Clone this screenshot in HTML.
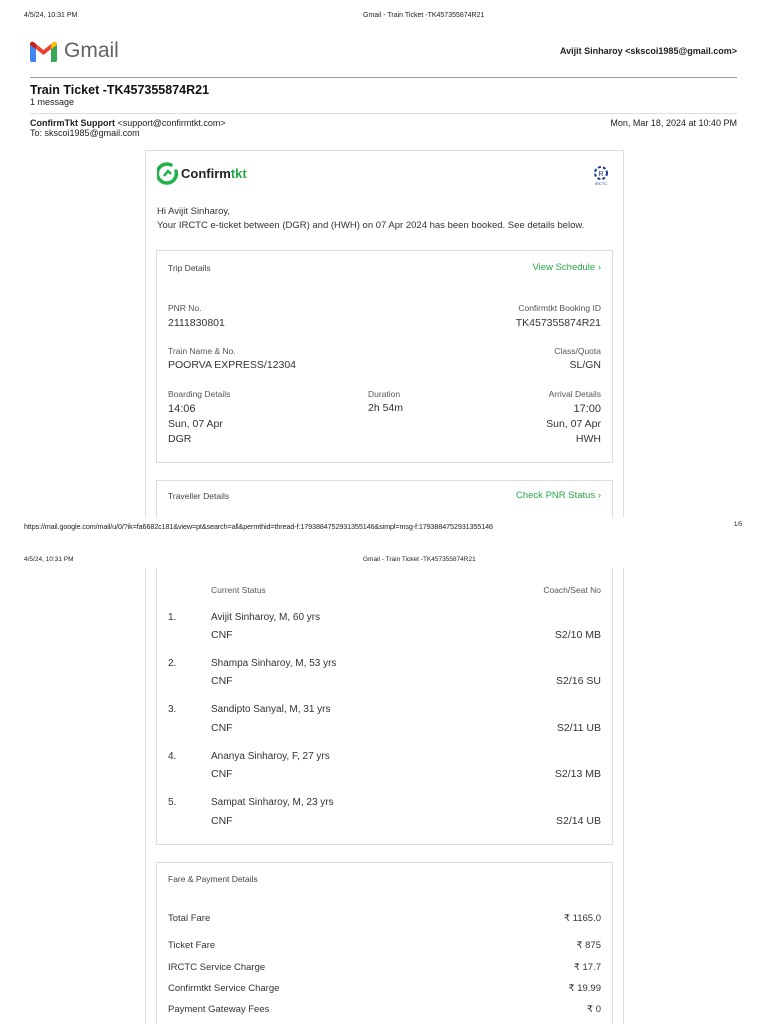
<!DOCTYPE html>
<html><head><meta charset="utf-8"><style>
*{margin:0;padding:0;box-sizing:border-box}
html,body{width:768px;height:1024px;overflow:hidden}
body{position:relative;background:#fff;font-family:"Liberation Sans",sans-serif;color:#222}
.a{position:absolute;white-space:nowrap}
.t7{font-size:7px;color:#222}
.lbl{font-size:8.5px;color:#555}
.val{font-size:10.5px;color:#333}
.g{color:#27a844}
.box{position:absolute;border:1px solid #ddd}
</style></head><body>
<div class="a t7" style="left:24px;top:12px">4/5/24, 10:31 PM</div>
<div class="a t7" style="left:363px;top:12px">Gmail - Train Ticket -TK457355874R21</div>

<svg class="a" style="left:30px;top:41px" width="27" height="21" viewBox="0 0 27 21">
<path d="M0 4 L0 19 Q0 21 2 21 L6 21 L6 8 Z" fill="#4285f4"/>
<path d="M21 8 L21 21 L25 21 Q27 21 27 19 L27 4 Z" fill="#34a853"/>
<path d="M0 4 Q0 0 3.5 1 L13.5 9 L23.5 1 Q27 0 27 4 L21 8 L13.5 14 L6 8 Z" fill="#ea4335"/>
<path d="M21 8 L27 4 Q27 0 23.5 1 L21 3 Z" fill="#fbbc04"/>
<path d="M0 4 Q0 0 3.5 1 L6 3 L6 8 Z" fill="#c5221f"/>
</svg>
<div class="a" style="left:64px;top:39px;font-size:21px;color:#5f6368">Gmail</div>
<div class="a" style="right:31px;top:46px;font-size:9px;font-weight:bold;color:#222">Avijit Sinharoy &lt;skscoi1985@gmail.com&gt;</div>
<div class="a" style="left:30px;top:77px;width:707px;border-top:1px solid #999"></div>
<div class="a" style="left:30px;top:83px;font-size:12.5px;font-weight:bold;color:#111">Train Ticket -TK457355874R21</div>
<div class="a" style="left:30px;top:97px;font-size:9px;color:#222">1 message</div>
<div class="a" style="left:30px;top:113px;width:707px;border-top:1px solid #ddd"></div>
<div class="a" style="left:30px;top:118px;font-size:9px;color:#222"><b>ConfirmTkt Support</b> &lt;support@confirmtkt.com&gt;</div>
<div class="a" style="left:30px;top:128px;font-size:9px;color:#222">To: skscoi1985@gmail.com</div>
<div class="a" style="right:31px;top:118px;font-size:9px;color:#222">Mon, Mar 18, 2024 at 10:40 PM</div>

<div class="box" style="left:145px;top:150px;width:479px;height:380px;border-bottom:none"></div>
<svg class="a" style="left:157px;top:162px" width="22" height="24" viewBox="0 0 22 24"><path d="M14 3 A9.5 9.5 0 1 0 19 9" fill="none" stroke="#22b14c" stroke-width="3.5" stroke-linecap="round"/><path d="M7 14 L11 9 L14 12" fill="none" stroke="#22b14c" stroke-width="2.5"/></svg>
<div class="a" style="left:181px;top:166px;font-size:13px;font-weight:bold;color:#222">Confirm<span class="g">tkt</span></div>
<svg class="a" style="left:592px;top:164px" width="18" height="22" viewBox="0 0 18 22"><circle cx="9" cy="9" r="6" fill="none" stroke="#1a3c8c" stroke-width="2" stroke-dasharray="3 2"/><text x="9" y="12" font-size="7" text-anchor="middle" fill="#1a3c8c" font-family="Liberation Sans">R</text><text x="9" y="21" font-size="4" text-anchor="middle" fill="#1a3c8c" font-family="Liberation Sans">IRCTC</text></svg>
<div class="a" style="left:157px;top:206px;font-size:9.5px;color:#333">Hi Avijit Sinharoy,</div>
<div class="a" style="left:157px;top:220px;font-size:9.5px;color:#333">Your IRCTC e-ticket between (DGR) and (HWH) on 07 Apr 2024 has been booked. See details below.</div>

<div class="box" style="left:156px;top:250px;width:457px;height:213px"></div>
<div class="a lbl" style="left:168px;top:263px;color:#444">Trip Details</div>
<div class="a g" style="right:167px;top:262px;font-size:9.5px">View Schedule ›</div>
<div class="a lbl" style="left:168px;top:303px">PNR No.</div>
<div class="a val" style="left:168px;top:317px">2111830801</div>
<div class="a lbl" style="right:167px;top:303px">Confirmtkt Booking ID</div>
<div class="a val" style="right:167px;top:317px">TK457355874R21</div>
<div class="a lbl" style="left:168px;top:346px">Train Name &amp; No.</div>
<div class="a val" style="left:168px;top:359px">POORVA EXPRESS/12304</div>
<div class="a lbl" style="right:167px;top:346px">Class/Quota</div>
<div class="a val" style="right:167px;top:359px">SL/GN</div>
<div class="a lbl" style="left:168px;top:389px">Boarding Details</div>
<div class="a val" style="left:168px;top:403px;font-size:11px">14:06</div>
<div class="a val" style="left:168px;top:418px">Sun, 07 Apr</div>
<div class="a val" style="left:168px;top:433px">DGR</div>
<div class="a lbl" style="left:368px;top:389px">Duration</div>
<div class="a val" style="left:368px;top:402px">2h 54m</div>
<div class="a lbl" style="right:167px;top:389px">Arrival Details</div>
<div class="a val" style="right:167px;top:403px;font-size:11px">17:00</div>
<div class="a val" style="right:167px;top:418px">Sun, 07 Apr</div>
<div class="a val" style="right:167px;top:433px">HWH</div>

<div class="box" style="left:156px;top:480px;width:457px;height:50px;border-bottom:none"></div>
<div class="a lbl" style="left:168px;top:491px;color:#444">Traveller Details</div>
<div class="a g" style="right:167px;top:490px;font-size:9.5px">Check PNR Status ›</div>

<div class="a" style="left:0;top:517px;width:768px;height:48px;background:#fff"></div>
<div class="a" style="left:24px;top:522px;font-size:7.2px;letter-spacing:-0.1px;color:#222">https://mail.google.com/mail/u/0/?ik=fa6682c181&amp;view=pt&amp;search=all&amp;permthid=thread-f:1793884752931355146&amp;simpl=msg-f:1793884752931355146</div>
<div class="a t7" style="left:734px;top:522px;font-size:6px">1/5</div>
<div class="a t7" style="left:24px;top:556px;font-size:6.5px">4/5/24, 10:31 PM</div>
<div class="a t7" style="left:363px;top:556px;font-size:6.5px">Gmail - Train Ticket -TK457355874R21</div>

<div class="box" style="left:145px;top:568px;width:479px;height:470px;border-top:none"></div>
<div class="box" style="left:156px;top:568px;width:457px;height:277px;border-top:none"></div>
<div class="a lbl" style="left:211px;top:585px">Current Status</div>
<div class="a lbl" style="right:167px;top:585px">Coach/Seat No</div>

<div class="a val" style="left:168px;top:612px;font-size:10px">1.</div>
<div class="a val" style="left:211px;top:612px;font-size:10px">Avijit Sinharoy, M, 60 yrs</div>
<div class="a val" style="left:211px;top:629px">CNF</div>
<div class="a val" style="right:167px;top:629px">S2/10 MB</div>

<div class="a val" style="left:168px;top:658px;font-size:10px">2.</div>
<div class="a val" style="left:211px;top:658px;font-size:10px">Shampa Sinharoy, M, 53 yrs</div>
<div class="a val" style="left:211px;top:675px">CNF</div>
<div class="a val" style="right:167px;top:675px">S2/16 SU</div>

<div class="a val" style="left:168px;top:704px;font-size:10px">3.</div>
<div class="a val" style="left:211px;top:704px;font-size:10px">Sandipto Sanyal, M, 31 yrs</div>
<div class="a val" style="left:211px;top:722px">CNF</div>
<div class="a val" style="right:167px;top:722px">S2/11 UB</div>

<div class="a val" style="left:168px;top:751px;font-size:10px">4.</div>
<div class="a val" style="left:211px;top:751px;font-size:10px">Ananya Sinharoy, F, 27 yrs</div>
<div class="a val" style="left:211px;top:768px">CNF</div>
<div class="a val" style="right:167px;top:768px">S2/13 MB</div>

<div class="a val" style="left:168px;top:797px;font-size:10px">5.</div>
<div class="a val" style="left:211px;top:797px;font-size:10px">Sampat Sinharoy, M, 23 yrs</div>
<div class="a val" style="left:211px;top:815px">CNF</div>
<div class="a val" style="right:167px;top:815px">S2/14 UB</div>

<div class="box" style="left:156px;top:862px;width:457px;height:180px"></div>
<div class="a lbl" style="left:168px;top:874px;color:#444">Fare &amp; Payment Details</div>
<div class="a lbl" style="left:168px;top:913px;font-size:9.5px;color:#333">Total Fare</div>
<div class="a lbl" style="right:167px;top:913px;font-size:9.5px;color:#333">₹ 1165.0</div>
<div class="a lbl" style="left:168px;top:940px;font-size:9.5px;color:#333">Ticket Fare</div>
<div class="a lbl" style="right:167px;top:940px;font-size:9.5px;color:#333">₹ 875</div>
<div class="a lbl" style="left:168px;top:962px;font-size:9.5px;color:#333">IRCTC Service Charge</div>
<div class="a lbl" style="right:167px;top:962px;font-size:9.5px;color:#333">₹ 17.7</div>
<div class="a lbl" style="left:168px;top:983px;font-size:9.5px;color:#333">Confirmtkt Service Charge</div>
<div class="a lbl" style="right:167px;top:983px;font-size:9.5px;color:#333">₹ 19.99</div>
<div class="a lbl" style="left:168px;top:1004px;font-size:9.5px;color:#333">Payment Gateway Fees</div>
<div class="a lbl" style="right:167px;top:1004px;font-size:9.5px;color:#333">₹ 0</div>
</body></html>
